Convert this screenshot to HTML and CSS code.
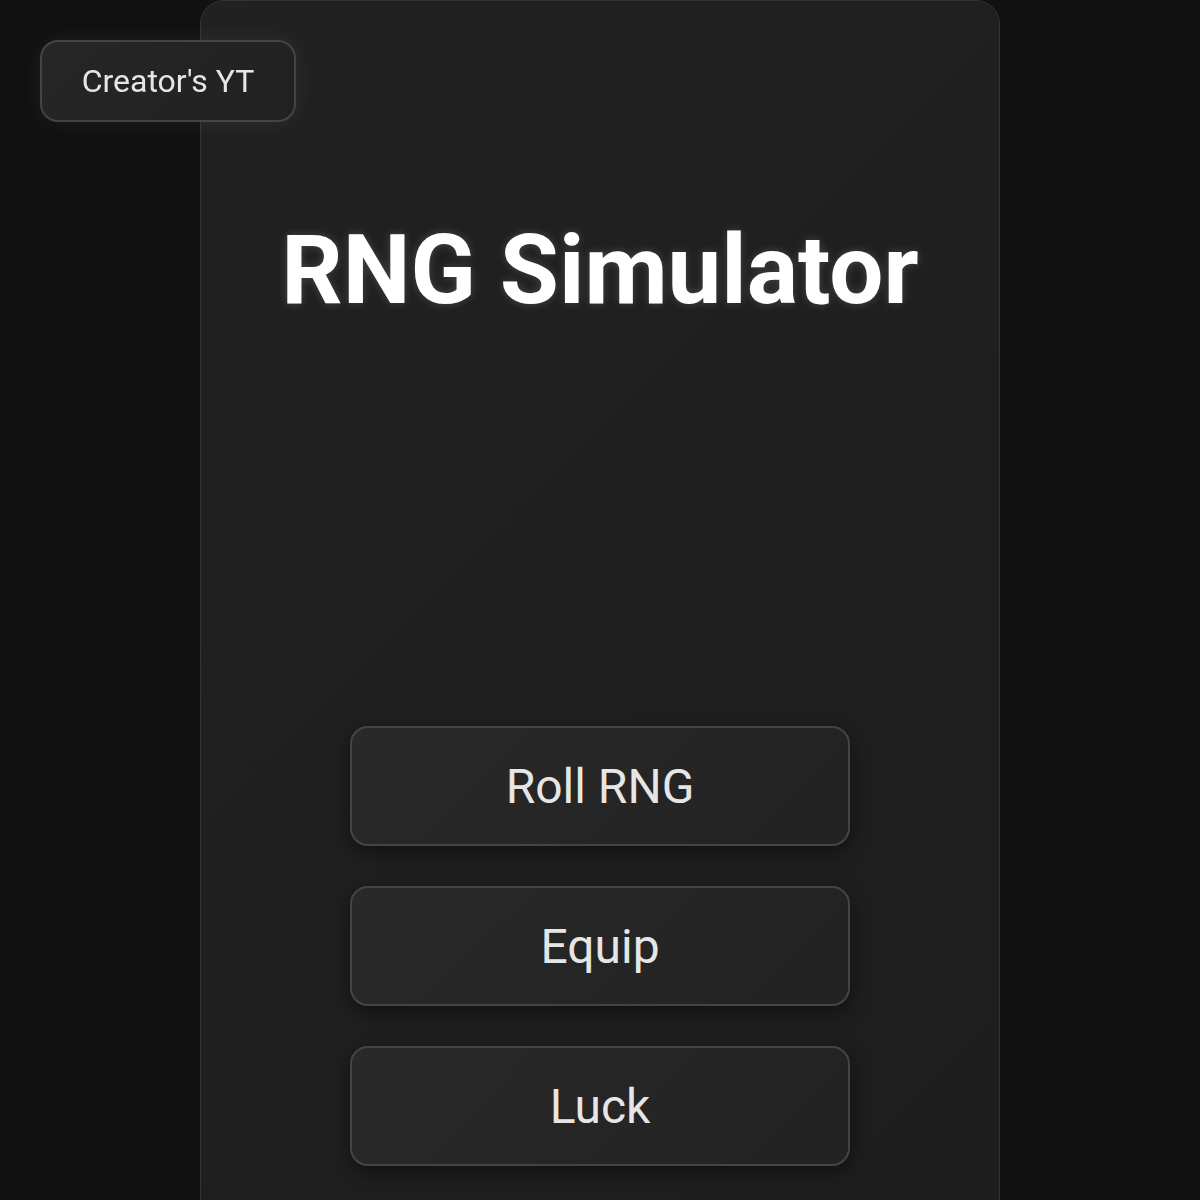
FILE: index.html
```html
<!DOCTYPE html>
<html lang="en">
<head>
    <meta charset="UTF-8">
    <meta name="viewport" content="width=device-width, initial-scale=1.0">
    <title>RNG Simulator</title>
    <link rel="stylesheet" href="styles.css">
</head>
<body>
    <!-- Link to the creator's channel -->
    <button class="creator-btn">Creator's YT</button>

    <div class="container">
        <h1>RNG Simulator</h1>

        <div class="result" id="result"></div>

        <div class="actions">
            <button class="action-btn">Roll RNG</button>
            <button class="action-btn">Equip</button>
            <button class="action-btn">Luck</button>
        </div>
    </div>
</body>
</html>
```

FILE: styles.css
```css
body {
    font-family: Roboto, "Liberation Sans", sans-serif;
    margin: 0;
    padding: 0;
    background-color: #111;
    color: #e6e6e6;
}
.creator-btn {
    position: fixed;
    top: 40px;
    left: 40px;
    width: 256px;
    height: 82px;
    font-family: Roboto, "Liberation Sans", sans-serif;
    font-size: 32px;
    color: #e6e6e6;
    background: linear-gradient(135deg, #262626, #212121);
    border: 2px solid #444;
    border-radius: 18px;
    box-shadow: 0 0 24px rgba(255, 255, 255, 0.06);
    cursor: pointer;
    z-index: 2;
}
.container {
    width: 800px;
    min-height: 1300px;
    margin: 0 auto;
    padding: 40px 0;
    background: linear-gradient(135deg, #212121, #1d1d1d);
    border: 1px solid #333;
    border-radius: 24px;
    box-sizing: border-box;
}
h1 {
    margin: 172px 0 0;
    font-size: 96px;
    line-height: 115px;
    font-weight: 700;
    text-align: center;
    color: #fff;
    text-shadow: 0 0 10px rgba(255, 255, 255, 0.18);
}
.result {
    height: 398px;
}
.actions {
    display: flex;
    flex-direction: column;
    align-items: center;
    gap: 40px;
}
.action-btn {
    width: 500px;
    height: 120px;
    font-family: Roboto, "Liberation Sans", sans-serif;
    font-size: 48px;
    color: #e6e6e6;
    background: linear-gradient(135deg, #292929, #222);
    border: 2px solid #444;
    border-radius: 18px;
    box-shadow: 0 6px 20px rgba(0, 0, 0, 0.45);
    cursor: pointer;
}
```
